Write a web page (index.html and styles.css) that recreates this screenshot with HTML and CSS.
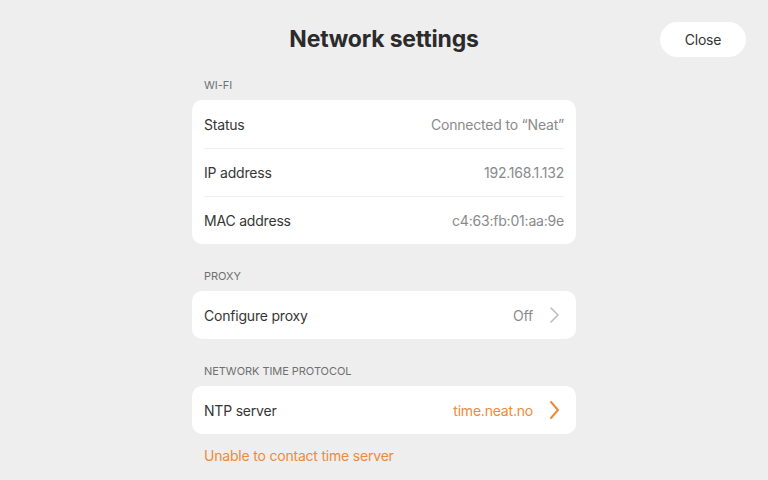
FILE: index.html
```html
<!DOCTYPE html>
<html lang="en">
<head>
<meta charset="utf-8">
<title>Network settings</title>
<link rel="stylesheet" href="styles.css">
</head>
<body>
<header class="header">
  <div></div>
  <h1 class="title">Network settings</h1>
  <button class="close">Close</button>
</header>
<main class="content">
  <div class="section-label first">WI-FI</div>
  <div class="card">
    <div class="row"><span class="name">Status</span><span class="value">Connected to “Neat”</span></div>
    <div class="row sep"><span class="name">IP address</span><span class="value">192.168.1.132</span></div>
    <div class="row sep"><span class="name">MAC address</span><span class="value">c4:63:fb:01:aa:9e</span></div>
  </div>

  <div class="section-label">PROXY</div>
  <div class="card">
    <div class="row"><span class="name">Configure proxy</span><span class="value">Off</span>
      <svg class="chev" width="12" height="20" viewBox="0 0 12 20"><path d="M3 3 L10 10 L3 17" fill="none" stroke="#bdbdbd" stroke-width="1.6" stroke-linecap="round" stroke-linejoin="round"/></svg>
    </div>
  </div>

  <div class="section-label">NETWORK TIME PROTOCOL</div>
  <div class="card">
    <div class="row"><span class="name">NTP server</span><span class="value warn">time.neat.no</span>
      <svg class="chev" width="12" height="20" viewBox="0 0 12 20"><path d="M3 2 L10 10 L3 18" fill="none" stroke="#ee8a3a" stroke-width="2" stroke-linecap="round" stroke-linejoin="round"/></svg>
    </div>
  </div>
  <p class="error">Unable to contact time server</p>
</main>
</body>
</html>
```
FILE: styles.css
```css
html, body {
  margin: 0;
  padding: 0;
  background: #eeeeee;
  font-family: Inter, "Noto Sans", "Liberation Sans", sans-serif;
  color: #333333;
}
body {
  width: 768px;
  height: 480px;
  overflow: hidden;
}
.header {
  display: grid;
  grid-template-columns: 1fr auto 1fr;
  align-items: center;
  padding: 22px 22px 0 22px;
  height: 35px;
}
.title {
  margin: 0;
  font-size: 23px;
  font-weight: 700;
  color: #2b2b2b;
  letter-spacing: -0.2px;
  line-height: 35px;
}
.close {
  justify-self: end;
  width: 86px;
  height: 35px;
  border: none;
  border-radius: 18px;
  background: #ffffff;
  font-family: inherit;
  font-size: 14px;
  letter-spacing: -0.2px;
  color: #333333;
  padding: 0;
}
.content {
  width: 384px;
  margin: 0 auto;
}
.section-label {
  font-size: 11px;
  line-height: 16px;
  color: #707070;
  padding-left: 12px;
  margin-top: 24px;
  margin-bottom: 7px;
  letter-spacing: -0.05px;
}
.section-label.first {
  margin-top: 20px;
}
.card {
  background: #ffffff;
  border-radius: 10px;
  padding: 0 12px;
}
.row {
  display: flex;
  align-items: center;
  height: 48px;
  box-sizing: border-box;
  font-size: 14px;
  letter-spacing: -0.2px;
}
.row.sep {
  border-top: 1px solid #efefef;
}
.name {
  flex: 1;
  color: #363636;
}
.value {
  color: #8a8a8a;
}
.value.warn {
  color: #ee8a3a;
}
.chev {
  margin-left: 15px;
  margin-right: 4px;
  display: block;
}
.error {
  margin: 12px 0 0 0;
  padding-left: 12px;
  font-size: 14px;
  line-height: 20px;
  letter-spacing: -0.2px;
  color: #ee8a3a;
}
```
